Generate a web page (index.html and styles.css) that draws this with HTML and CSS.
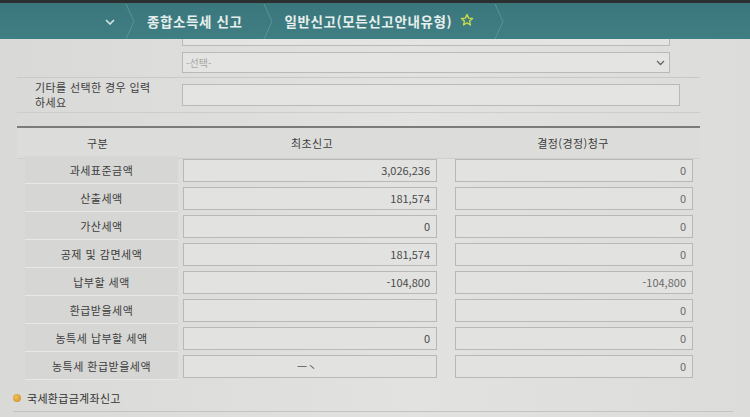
FILE: index.html
```html
<!DOCTYPE html>
<html lang="ko">
<head>
    <meta charset="UTF-8">
    <meta name="viewport" content="width=device-width, initial-scale=1.0">
    <title>종합소득세 신고</title>
    <link rel="stylesheet" href="styles.css">
</head>
<body>
    <div class="topbar">
        <div class="crumbs">
            <div class="crumb crumb-toggle">
                <svg width="10" height="6" viewBox="0 0 10 6"><path d="M1 1 L5 5 L9 1" fill="none" stroke="#d8e6e4" stroke-width="1.6"/></svg>
            </div>
            <svg class="sep" width="10" height="35" viewBox="0 0 10 35"><path d="M1 0 L9 17.5 L1 35" fill="none" stroke="#5a9397" stroke-width="1"/></svg>
            <div class="crumb">종합소득세 신고</div>
            <svg class="sep" width="10" height="35" viewBox="0 0 10 35"><path d="M1 0 L9 17.5 L1 35" fill="none" stroke="#5a9397" stroke-width="1"/></svg>
            <div class="crumb">
                일반신고(모든신고안내유형)
                <svg class="star" width="14" height="14" viewBox="0 0 24 24"><path d="M12 2.5 L14.8 8.8 L21.5 9.4 L16.4 13.9 L17.9 20.6 L12 17.1 L6.1 20.6 L7.6 13.9 L2.5 9.4 L9.2 8.8 Z" fill="none" stroke="#c9d84c" stroke-width="2.4" stroke-linejoin="round"/></svg>
            </div>
            <svg class="sep" width="10" height="35" viewBox="0 0 10 35"><path d="M1 0 L9 17.5 L1 35" fill="none" stroke="#5a9397" stroke-width="1"/></svg>
        </div>
    </div>

    <div class="page">
        <div class="form-rows">
            <div class="form-row form-row-prev">
                <div class="form-label"></div>
                <div class="form-field"><div class="box box-prev"></div></div>
            </div>
            <div class="form-row">
                <div class="form-label"></div>
                <div class="form-field">
                    <div class="box select">
                        <span class="placeholder">-선택-</span>
                        <svg width="9" height="6" viewBox="0 0 9 6"><path d="M1 1 L4.5 4.5 L8 1" fill="none" stroke="#666" stroke-width="1.3"/></svg>
                    </div>
                </div>
            </div>
            <div class="form-row form-row-tall">
                <div class="form-label">기타를 선택한 경우 입력<br>하세요</div>
                <div class="form-field"><div class="box box-wide"></div></div>
            </div>
        </div>

        <div class="grid-table">
            <div class="th">구분</div>
            <div class="th">최초신고</div>
            <div class="th">결정(경정)청구</div>

            <div class="td-label">과세표준금액</div>
            <div class="td"><div class="num num-a">3,026,236</div></div>
            <div class="td"><div class="num num-b">0</div></div>

            <div class="td-label">산출세액</div>
            <div class="td"><div class="num num-a">181,574</div></div>
            <div class="td"><div class="num num-b">0</div></div>

            <div class="td-label">가산세액</div>
            <div class="td"><div class="num num-a">0</div></div>
            <div class="td"><div class="num num-b">0</div></div>

            <div class="td-label">공제 및 감면세액</div>
            <div class="td"><div class="num num-a">181,574</div></div>
            <div class="td"><div class="num num-b">0</div></div>

            <div class="td-label">납부할 세액</div>
            <div class="td"><div class="num num-a">-104,800</div></div>
            <div class="td"><div class="num num-b">-104,800</div></div>

            <div class="td-label">환급받을세액</div>
            <div class="td"><div class="num num-a"></div></div>
            <div class="td"><div class="num num-b">0</div></div>

            <div class="td-label">농특세 납부할 세액</div>
            <div class="td"><div class="num num-a">0</div></div>
            <div class="td"><div class="num num-b">0</div></div>

            <div class="td-label">농특세 환급받을세액</div>
            <div class="td"><div class="num num-a num-center">一丶</div></div>
            <div class="td"><div class="num num-b">0</div></div>
        </div>

        <div class="section-title">
            <span class="bullet"></span>
            국세환급금계좌신고
        </div>
    </div>
</body>
</html>
```

FILE: styles.css
```css
body {
    margin: 0;
    font-family: "Noto Sans CJK KR", "Noto Sans", sans-serif;
    background: linear-gradient(90deg, #d9d9d7 0%, #e2e2e0 55%, #dcdcda 100%);
    color: #474747;
    height: 417px;
    overflow: hidden;
}

.topbar {
    height: 36px;
    border-top: 3px solid #2b2f30;
    background: linear-gradient(180deg, #3a777c 0%, #3f7e83 100%);
    color: #e6efed;
}

.crumbs {
    display: flex;
    align-items: center;
    height: 36px;
    padding-left: 100px;
}

.crumb {
    display: flex;
    align-items: center;
    gap: 6px;
    height: 36px;
    padding: 0 20px 0 12px;
    font-size: 13.5px;
    font-weight: 700;
    letter-spacing: 0.6px;
}

.crumb-toggle {
    padding: 0 10px 0 5px;
}

.crumb-toggle svg {
    margin-top: 1px;
}

.star {
    margin-left: 2px;
    margin-bottom: 2px;
}

.page {
    padding: 0 0 0 17px;
}

.form-rows {
    width: 683px;
}

.form-row {
    display: flex;
    border-bottom: 1px solid #c9c9c7;
}

.form-row-prev {
    height: 7px;
    border-bottom: none;
}

.form-label {
    width: 165px;
    padding-left: 18px;
    box-sizing: border-box;
    font-size: 11px;
    line-height: 15px;
    letter-spacing: 0.4px;
    color: #3e3e3e;
    display: flex;
    align-items: center;
}

.form-field {
    flex: 1;
    padding: 6px 0 4px 0;
}

.form-row-prev .form-field {
    padding: 0;
}

.box {
    border: 1px solid #b9b9b7;
    background: #e4e4e2;
    box-sizing: border-box;
}

.box-prev {
    width: 488px;
    height: 7px;
    border-top: none;
}

.select {
    width: 488px;
    height: 21px;
    display: flex;
    align-items: center;
    justify-content: space-between;
    padding: 0 4px 0 3px;
}

.placeholder {
    font-size: 10px;
    color: #a8a8a6;
}

.form-row-tall {
    height: 34px;
    border-bottom-color: #cdcdcb;
}

.form-row-tall .form-field {
    padding: 6px 0 5px 0;
}

.box-wide {
    width: 498px;
    height: 22px;
}

.grid-table {
    display: grid;
    grid-template-columns: 161px 268px 254px;
    grid-auto-rows: 28px;
    width: 683px;
    margin-top: 13px;
    border-top: 2px solid #7b7b79;
}

.th {
    height: 30px;
    display: flex;
    align-items: center;
    justify-content: center;
    font-size: 11px;
    letter-spacing: 0.4px;
    color: #3d3d3d;
    background: #dcdcda;
    border-bottom: 1px solid #cfcfcd;
}

.td-label {
    margin-left: 8px;
    display: flex;
    align-items: center;
    justify-content: center;
    font-size: 11px;
    letter-spacing: 0.5px;
    color: #3d3d3d;
    background: #d6d6d4;
    border-bottom: 1px solid #e8e8e6;
}

.td {
    display: flex;
    align-items: center;
}

.num {
    height: 23px;
    box-sizing: border-box;
    border: 1px solid #b8b8b6;
    background: #e2e2e0;
    display: flex;
    align-items: center;
    justify-content: flex-end;
    padding-right: 6px;
    font-size: 11px;
    color: #4a4a4a;
}

.num-a {
    width: 254px;
    margin-left: 5px;
}

.num-b {
    width: 238px;
    margin-left: 9px;
    color: #6a6a6a;
}

.num-center {
    justify-content: center;
    color: #555;
    font-size: 10px;
}

.section-title {
    display: flex;
    align-items: center;
    gap: 6px;
    margin-top: 10px;
    margin-left: -4px;
    padding-bottom: 5px;
    font-size: 11px;
    letter-spacing: 0.3px;
    color: #333;
    border-bottom: 1px solid #c4c4c2;
    width: 720px;
}

.bullet {
    width: 8px;
    height: 8px;
    border-radius: 50%;
    background: radial-gradient(circle at 40% 40%, #f0c060 0%, #d99a2b 70%);
}
```
